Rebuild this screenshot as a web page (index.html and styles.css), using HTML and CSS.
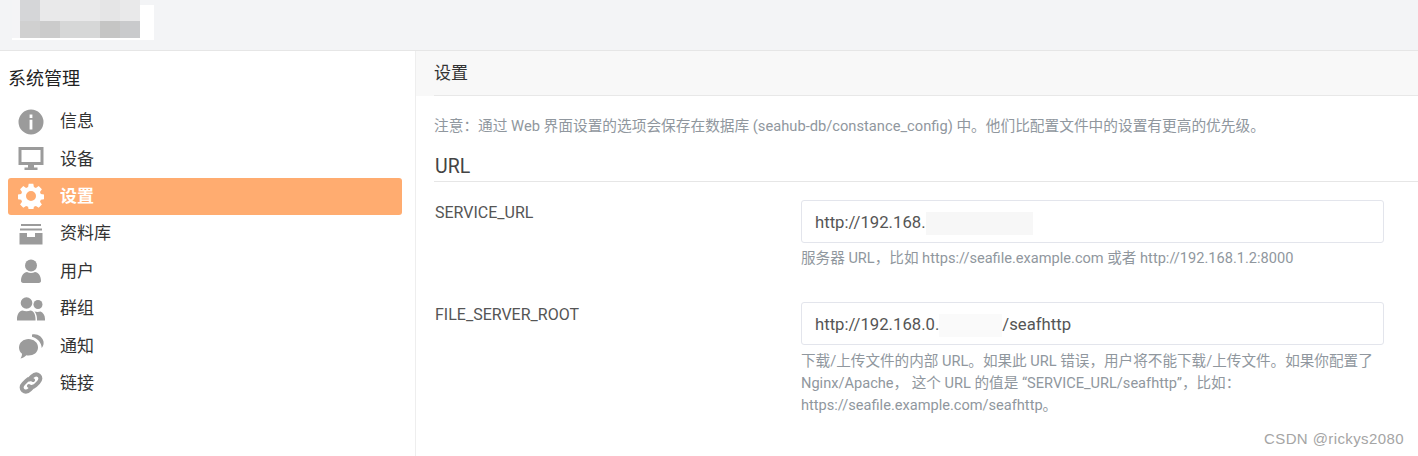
FILE: index.html
```html
<!DOCTYPE html>
<html lang="zh-CN">
<head>
    <meta charset="UTF-8">
    <title>设置 - 系统管理</title>
    <link rel="stylesheet" href="styles.css">
</head>
<body>
    <div class="top-bar">
        <!-- pixelated logo -->
        <div class="logo">
            <div class="logo-row">
                <span class="px p1"></span><span class="px p2"></span><span class="px p3"></span><span class="px p3"></span><span class="px p3"></span><span class="px p4"></span><span class="px p3"></span>
            </div>
            <div class="logo-row">
                <span class="px p1"></span><span class="px p5"></span><span class="px p6"></span><span class="px p7"></span><span class="px p7"></span><span class="px p8"></span><span class="px p9"></span>
            </div>
        </div>
    </div>

    <div class="layout">
        <div class="side">
            <h2 class="side-title">系统管理</h2>
            <ul class="nav">
                <li class="nav-item">
                    <svg class="icon" viewBox="0 0 26 26"><path fill-rule="evenodd" d="M13 .5a12.5 12.5 0 1 1 0 25 12.5 12.5 0 0 1 0-25zM11.600 5.500v3.400h2.800V5.500zM11.600 10.800v9.700h2.800v-9.700z"/></svg>
                    信息
                </li>
                <li class="nav-item">
                    <svg class="icon" viewBox="0 0 26 26"><path fill-rule="evenodd" d="M.5 1h25v18H16v2.500h3.500V24H6.500v-2.500H10V19H.5zM3.500 4v12h19V4z"/></svg>
                    设备
                </li>
                <li class="nav-item active">
                    <svg class="icon" viewBox="0 0 26 26"><path fill-rule="evenodd" d="M10.700.8h4.600l.6 3.300 2 .8 2.800-1.900 3.200 3.200-1.900 2.800.8 2 3.300.6v4.600l-3.300.6-.8 2 1.900 2.800-3.200 3.200-2.800-1.900-2 .8-.6 3.300h-4.600l-.6-3.300-2-.8-2.800 1.900-3.200-3.200 1.900-2.800-.8-2-3.300-.6v-4.600l3.300-.6.8-2-1.900-2.800 3.200-3.200 2.800 1.900 2-.8zM13 8a5 5 0 1 0 0 10 5 5 0 0 0 0-10z"/></svg>
                    设置
                </li>
                <li class="nav-item">
                    <svg class="icon" viewBox="0 0 26 26"><path d="M3 3h20v2H3zM2 7.500h22v2H2zM1.500 12H9v4h8v-4h7.500v11.500h-23z"/></svg>
                    资料库
                </li>
                <li class="nav-item">
                    <svg class="icon" viewBox="0 0 26 26"><circle cx="13" cy="7.500" r="6"/><path d="M3 23c0-6 3-8.500 6-9 2.500 1.200 5.500 1.200 8 0 3 .5 6 3 6 9 0 1.500-1.500 2-3 2H6c-1.500 0-3-.5-3-2z"/></svg>
                    用户
                </li>
                <li class="nav-item">
                    <svg class="icon icon-wide" viewBox="0 0 28 26"><circle cx="9.500" cy="7" r="5.800"/><circle cx="21" cy="8.500" r="4.500"/><path d="M0 23c0-5 2.500-8 5.500-8.500 2.500 1 5.500 1 8 0 3 .5 5 3.500 5 8.500v1.500H0z"/><path d="M20 24.500V23c0-3-.8-5.500-2.500-7.500 2 .5 4 .5 6 0 2.500 1 4.500 3.500 4.500 7.500v1.500z"/></svg>
                    群组
                </li>
                <li class="nav-item">
                    <svg class="icon" viewBox="0 0 26 26"><path d="M10.500 6c5 0 9.500 3.500 9.500 8.500s-4.500 8-9.500 8c-.8 0-1.500 0-2.200-.2C7 23.800 5 25.200 2.500 25.500c1-1.400 1.500-3 1.500-4.700C2 19.400 1 17 1 14.500 1 9.500 5.500 6 10.500 6z"/><path d="M14 1.500c5-1.500 10.500 2 11.500 7 .4 2.500-.2 4.800-1.800 6.500-.2-5-3.700-9.500-9.700-11.200z"/></svg>
                    通知
                </li>
                <li class="nav-item">
                    <svg class="icon" viewBox="0 0 26 26"><path fill="none" stroke="currentColor" stroke-width="4" stroke-linecap="round" d="M11 9.500l3-3c2.500-2.500 5-2.800 7-1s1.800 4.500-.5 6.800l-3 3c-2 2-4.500 2.200-6.500.7M15 16.500l-3 3c-2.500 2.500-5 2.800-7 1s-1.800-4.500.5-6.800l3-3c2-2 4.500-2.200 6.500-.7"/></svg>
                    链接
                </li>
            </ul>
        </div>

        <div class="main">
            <div class="main-head"><h3>设置</h3></div>
            <div class="main-body">
                <p class="note">注意：通过 Web 界面设置的选项会保存在数据库 (seahub-db/constance_config) 中。他们比配置文件中的设置有更高的优先级。</p>
                <h4 class="section">URL</h4>

                <div class="field field-first">
                    <label class="field-name">SERVICE_URL</label>
                    <div class="field-value">
                        <div class="input">http://192.168.<span class="smudge smudge-a"></span></div>
                        <p class="help">服务器 URL，比如 https://seafile.example.com 或者 http://192.168.1.2:8000</p>
                    </div>
                </div>

                <div class="field">
                    <label class="field-name">FILE_SERVER_ROOT</label>
                    <div class="field-value">
                        <div class="input">http://192.168.0.<span class="smudge smudge-b"></span>/seafhttp</div>
                        <p class="help help-long">下载/上传文件的内部 URL。如果此 URL 错误，用户将不能下载/上传文件。如果你配置了 Nginx/Apache， 这个 URL 的值是 “SERVICE_URL/seafhttp”，比如： https://seafile.example.com/seafhttp。</p>
                    </div>
                </div>
            </div>
        </div>
    </div>

    <div class="watermark">CSDN @rickys2080</div>
</body>
</html>
```

FILE: styles.css
```css
* {
    box-sizing: border-box;
}
body {
    margin: 0;
    height: 456px;
    overflow: hidden;
    position: relative;
    background: #fff;
    color: #333;
    font-family: Roboto, "Noto Sans CJK SC", sans-serif;
    font-size: 15px;
}
.top-bar {
    height: 51px;
    background: #f3f4f6;
    border-bottom: 1px solid #e6e6e6;
}
.logo {
    width: 142px;
    height: 40px;
    margin-left: 12px;
    background: linear-gradient(#f3f4f6 5px, #fff 5px);
    display: flex;
    flex-direction: column;
}
.logo-row {
    display: flex;
    height: 17px;
}
.logo-row:first-child {
    height: 21px;
}
.px {
    width: 20px;
    height: 100%;
}
.p1 { width: 8px; background: #f4f4f6; }
.p2 { background: #d5d6d8; }
.p3 { background: #e9e9ea; }
.p4 { background: #e5e5e6; }
.p5 { background: #d0d0d0; }
.p6 { background: #cbcbcb; }
.p7 { background: #d6d7d7; }
.p8 { background: #c5c5c4; }
.p9 { background: #c9cacc; }

.layout {
    display: flex;
    height: 405px;
}
.side {
    width: 416px;
    flex-shrink: 0;
    padding: 0 13px 0 8px;
    border-right: 1px solid #eee;
}
.side-title {
    margin: 0;
    padding-top: 16px;
    height: 52px;
    font-size: 18px;
    font-weight: 400;
    line-height: 24px;
    color: #222;
}
.nav {
    list-style: none;
    margin: 0;
    padding: 0;
}
.nav-item {
    display: flex;
    align-items: center;
    height: 37.4px;
    padding: 0 0 4px 10px;
    border-radius: 3px;
    font-size: 17px;
    color: #333;
}
.nav-item.active {
    background: #ffac70;
    color: #fff;
    font-weight: 700;
}
.icon {
    width: 26px;
    height: 26px;
    margin: 4px 16px 0 0;
    fill: currentColor;
    color: #9b9b9b;
    flex-shrink: 0;
}
.icon-wide {
    width: 28px;
    margin-left: -1px;
    margin-right: 15px;
}
.active .icon {
    color: #fff;
}

.main {
    flex: 1;
}
.main-head {
    height: 45px;
    background: #f8f8f8;
    padding-left: 18px;
}
.main-head h3 {
    margin: 0;
    height: 45px;
    border-bottom: 1px solid #e8e8e8;
    font-size: 17px;
    font-weight: 400;
    line-height: 44px;
    color: #333;
}
.main-body {
    padding: 0 0 0 18px;
}
.note {
    margin: 0;
    padding: 20px 0 0 0;
    line-height: 20px;
    font-size: 14.7px;
    color: #90979e;
}
.section {
    margin: 0;
    margin-top: 16px;
    height: 30px;
    padding-left: 1px;
    border-bottom: 1px solid #e6e6e6;
    font-size: 19.5px;
    font-weight: 400;
    line-height: 29px;
    color: #444;
}
.field {
    display: flex;
    margin-top: 33px;
}
.field-first {
    margin-top: 18px;
}
.field-name {
    width: 367px;
    flex-shrink: 0;
    padding: 3px 0 0 1px;
    line-height: 20px;
    font-size: 16px;
    color: #555;
}
.field-value {
    width: 583px;
}
.input {
    height: 43px;
    padding-left: 13px;
    border: 1px solid #e3e5ec;
    border-radius: 3px;
    font-size: 16.7px;
    line-height: 43px;
    color: #555;
}
.smudge {
    display: inline-block;
    height: 23px;
    vertical-align: middle;
    background: #f7f7f7;
}
.smudge-a {
    width: 107px;
}
.smudge-b {
    width: 63px;
    background: #fafafa;
}
.help {
    margin: 4px 0 0;
    line-height: 22px;
    font-size: 14.6px;
    color: #90979e;
}
.help-long {
    margin-top: 5px;
}
.watermark {
    position: absolute;
    right: 14px;
    top: 430px;
    font-family: "Liberation Sans", sans-serif;
    font-size: 15px;
    line-height: 18px;
    letter-spacing: .4px;
    color: #a5a5a5;
}
```
